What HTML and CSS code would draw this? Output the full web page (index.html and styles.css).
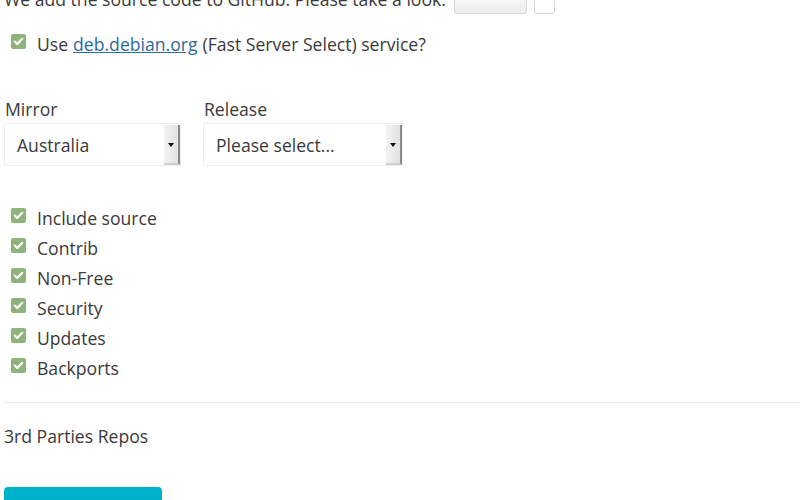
FILE: index.html
```html
<!DOCTYPE html>
<html>
<head>
<meta charset="utf-8">
<link rel="stylesheet" href="styles.css">
</head>
<body>
<div class="page">
  <p class="intro">We add the source code to GitHub. Please take a look: <span class="gh-btn"></span><span class="gh-count"></span></p>

  <label class="check first"><span class="box"><svg viewBox="0 0 15 15" width="15" height="15"><path d="M3.8 7.6 L6.3 10 L11.2 4.8" fill="none" stroke="#fff" stroke-width="2.2" stroke-linecap="round" stroke-linejoin="round"/></svg></span>Use <a href="#">deb.debian.org</a> (Fast Server Select) service?</label>

  <div class="selects">
    <div class="field">
      <div class="label">Mirror</div>
      <div class="select mirror"><span class="value">Australia</span><span class="arrow"><i></i></span></div>
    </div>
    <div class="field">
      <div class="label">Release</div>
      <div class="select release"><span class="value">Please select...</span><span class="arrow"><i></i></span></div>
    </div>
  </div>

  <div class="checks">
    <label class="check"><span class="box"><svg viewBox="0 0 15 15" width="15" height="15"><path d="M3.8 7.6 L6.3 10 L11.2 4.8" fill="none" stroke="#fff" stroke-width="2.2" stroke-linecap="round" stroke-linejoin="round"/></svg></span>Include source</label>
    <label class="check"><span class="box"><svg viewBox="0 0 15 15" width="15" height="15"><path d="M3.8 7.6 L6.3 10 L11.2 4.8" fill="none" stroke="#fff" stroke-width="2.2" stroke-linecap="round" stroke-linejoin="round"/></svg></span>Contrib</label>
    <label class="check"><span class="box"><svg viewBox="0 0 15 15" width="15" height="15"><path d="M3.8 7.6 L6.3 10 L11.2 4.8" fill="none" stroke="#fff" stroke-width="2.2" stroke-linecap="round" stroke-linejoin="round"/></svg></span>Non-Free</label>
    <label class="check"><span class="box"><svg viewBox="0 0 15 15" width="15" height="15"><path d="M3.8 7.6 L6.3 10 L11.2 4.8" fill="none" stroke="#fff" stroke-width="2.2" stroke-linecap="round" stroke-linejoin="round"/></svg></span>Security</label>
    <label class="check"><span class="box"><svg viewBox="0 0 15 15" width="15" height="15"><path d="M3.8 7.6 L6.3 10 L11.2 4.8" fill="none" stroke="#fff" stroke-width="2.2" stroke-linecap="round" stroke-linejoin="round"/></svg></span>Updates</label>
    <label class="check"><span class="box"><svg viewBox="0 0 15 15" width="15" height="15"><path d="M3.8 7.6 L6.3 10 L11.2 4.8" fill="none" stroke="#fff" stroke-width="2.2" stroke-linecap="round" stroke-linejoin="round"/></svg></span>Backports</label>
  </div>

  <hr class="sep">

  <div class="third">3rd Parties Repos</div>

  <div class="btn"></div>
</div>
</body>
</html>
```

FILE: styles.css
```css
html, body {
  margin: 0;
  padding: 0;
  background: #fff;
}
body {
  font-family: "Open Sans", "DejaVu Sans", sans-serif;
  font-size: 17.6px;
  color: #3a3a3a;
  overflow: hidden;
  height: 500px;
}
.page {
  padding: 0 0 0 4px;
}
.intro {
  margin: -13px 0 0 0;
  line-height: 24px;
  height: 24px;
  white-space: nowrap;
}
.gh-btn, .gh-count {
  display: inline-block;
  height: 20px;
  vertical-align: -8px;
  border: 1px solid #d5d5d5;
  border-radius: 3px;
  background: linear-gradient(#fafafa, #ececec);
  box-sizing: border-box;
}
.gh-btn { width: 73px; margin-left: 4px; }
.gh-count { width: 21px; margin-left: 7px; background: #fff; }

.check {
  display: flex;
  align-items: center;
  height: 30px;
  padding-left: 7px;
  white-space: nowrap;
}
.check.first {
  margin-top: 18px;
}
.box {
  width: 15px;
  height: 15px;
  background: #8db47a;
  border-radius: 2px;
  margin-right: 11px;
  margin-top: -6px;
  flex: none;
  display: flex;
}
.check a {
  color: #2d6a9a;
  text-decoration: underline;
  margin: 0 5px;
}

.selects {
  display: flex;
  gap: 22px;
  margin-top: 38px;
}
.label {
  line-height: 24px;
  padding-left: 1px;
  margin-bottom: 2px;
}
.select {
  display: flex;
  align-items: center;
  height: 43px;
  border: 1px solid #eee;
  box-sizing: border-box;
  background: #fff;
}
.mirror { width: 177px; }
.release { width: 200px; }
.value {
  flex: 1;
  padding-left: 12px;
}
.arrow {
  width: 14px;
  align-self: stretch;
  margin: 1px 0 0 0;
  background: linear-gradient(90deg, #f3f3f3, #e2e2e2);
  border-right: 2px solid #8a8a8a;
  border-bottom: 2px solid #cfcfcf;
  display: flex;
  align-items: center;
  justify-content: center;
}
.arrow i {
  width: 0;
  height: 0;
  border-left: 3px solid transparent;
  border-right: 3px solid transparent;
  border-top: 4px solid #111;
  margin-top: 2px;
}

.checks {
  margin-top: 37px;
}

.sep {
  border: 0;
  border-top: 1px solid #ececec;
  margin: 19px 0 0 0;
}
.third {
  margin-top: 21px;
  line-height: 24px;
}
.btn {
  margin-top: 39px;
  width: 158px;
  height: 40px;
  background: #00b2c9;
  border-radius: 4px;
}
```
